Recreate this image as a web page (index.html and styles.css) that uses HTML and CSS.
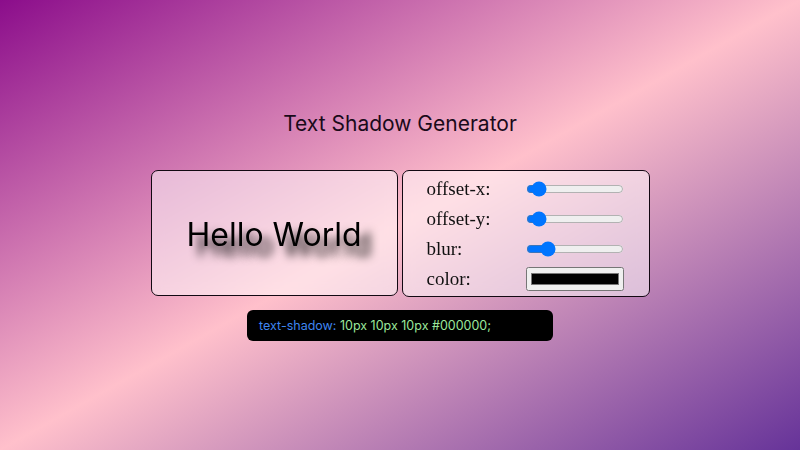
FILE: index.html
```html
<!DOCTYPE html>
<html>
<head>
    <link rel="stylesheet" href="styles.css">
</head>
<body>
<div class="page">
    <h1 class="title">Text Shadow Generator</h1>
    <div class="panels">
        <div class="card preview">
            <span class="sample">Hello World</span>
        </div>
        <div class="card controls">
            <label class="ctrlLabel" for="offX">offset-x:</label>
            <input type="range" min="0" max="100" value="7" class="slider" id="offX">
            <label class="ctrlLabel" for="offY">offset-y:</label>
            <input type="range" min="0" max="100" value="7" class="slider" id="offY">
            <label class="ctrlLabel" for="blur">blur:</label>
            <input type="range" min="0" max="100" value="18" class="slider" id="blur">
            <label class="ctrlLabel" for="shadowColor">color:</label>
            <input type="color" value="#000000" class="colorPick" id="shadowColor">
        </div>
    </div>
    <div class="code">
        <p class="codeLine"><span class="prop">text-shadow:</span> <span class="val">10px 10px 10px #000000;</span></p>
    </div>
</div>
</body>
</html>
```

FILE: styles.css
```css
html, body {
    margin: 0;
    height: 100%;
}
body {
    background: linear-gradient(to bottom right, #8b0d8b 0%, #ffc0cb 50%, #663399 100%);
    font-family: "Inter", "Noto Sans", sans-serif;
    overflow: hidden;
}
.page {
    display: flex;
    flex-direction: column;
    align-items: center;
    padding-top: 111px;
}
.title {
    margin: 0;
    font-size: 21px;
    font-weight: 400;
    color: #1a0a1a;
    line-height: 26px;
}
.panels {
    display: flex;
    gap: 4px;
    margin-top: 33px;
}
.card {
    width: 245px;
    height: 124px;
    border: 1.5px solid #120812;
    border-radius: 7px;
    background: rgba(255, 255, 255, 0.5);
    backdrop-filter: blur(6px);
}
.preview {
    display: flex;
    align-items: center;
    justify-content: center;
}
.sample {
    font-size: 32px;
    color: #000;
    text-shadow: 10px 10px 10px #000000;
    margin-top: 3px;
}
.controls {
    display: grid;
    grid-template-columns: 1fr 98px;
    grid-auto-rows: 30px;
    align-items: center;
    padding: 3px 25px 0 24px;
    box-sizing: border-box;
    width: 248px;
    height: 127px;
}
.ctrlLabel {
    font-family: "Liberation Serif", serif;
    font-size: 19px;
    color: #111;
}
.slider {
    margin: 0;
    width: 98px;
}
.colorPick {
    width: 98px;
    height: 24px;
    margin: 0;
}
.code {
    margin-top: 13px;
    width: 306px;
    height: 31px;
    box-sizing: border-box;
    padding-left: 12px;
    background: #000;
    border-radius: 6px;
    display: flex;
    align-items: center;
    font-size: 12.5px;
}
.codeLine {
    margin: 0;
}
.prop {
    color: #3f86f0;
}
.val {
    color: #9be89b;
}
```
